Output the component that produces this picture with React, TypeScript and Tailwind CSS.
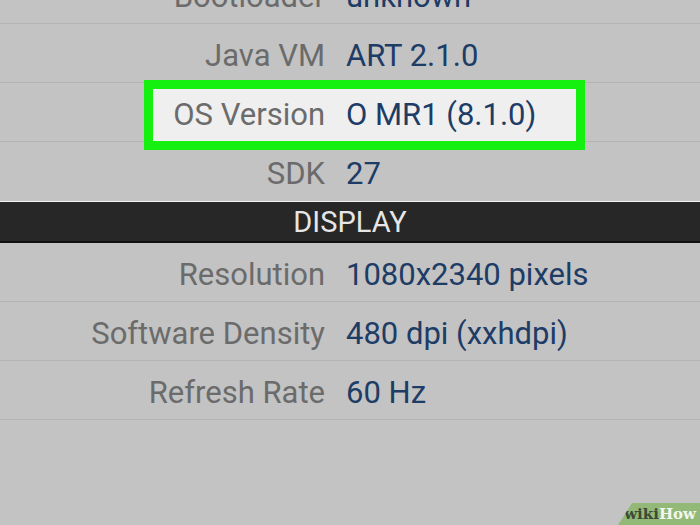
import React from "react";

type Row = { label: string; value: string; highlight?: boolean };

const top: Row[] = [
  { label: "Bootloader", value: "unknown" },
  { label: "Java VM", value: "ART 2.1.0" },
  { label: "OS Version", value: "O MR1 (8.1.0)", highlight: true },
  { label: "SDK", value: "27" },
];

const display: Row[] = [
  { label: "Resolution", value: "1080x2340 pixels" },
  { label: "Software Density", value: "480 dpi (xxhdpi)" },
  { label: "Refresh Rate", value: "60 Hz" },
];

function InfoRow({ row, last }: { row: Row; last?: boolean }) {
  return (
    <div
      className={
        "relative flex h-[59px] items-center pt-[4px] " +
        (last ? "" : "border-b border-[#b3b3b3]")
      }
    >
      {row.highlight && (
        <div className="absolute left-[144px] top-[-3px] h-[70px] w-[441px] border-[9px] border-[#16f010] bg-[#efefef]" />
      )}
      <div className="relative z-10 w-[325px] text-right text-[#6b6b6b]">{row.label}</div>
      <div className="relative z-10 ml-[21px] text-[#1d3c66]">{row.value}</div>
    </div>
  );
}

export default function App() {
  return (
    <div
      className="relative h-[525px] w-[700px] overflow-hidden bg-[#c3c3c3] text-[31px] leading-none"
      style={{ fontFamily: "Roboto, 'Liberation Sans', sans-serif" }}
    >
      <div className="-mt-[35px]">
        {top.map((r, i) => (
          <InfoRow key={r.label} row={r} last={i === top.length - 1} />
        ))}
        <div className="border-t border-[#f2f2f2]">
          <div className="flex h-[41px] items-center justify-center border-b-2 border-[#111] bg-[#272727] pt-[2px] text-[29px] text-[#e6e6e6]">
            DISPLAY
          </div>
        </div>
        {display.map((r) => (
          <InfoRow key={r.label} row={r} />
        ))}
      </div>
      <div
        className="absolute bottom-0 right-0 flex h-[22px] w-[82px] items-center justify-end pr-[4px] bg-[#93b979] text-[15px] font-bold"
        style={{ clipPath: "polygon(14px 0, 100% 0, 100% 100%, 0 100%)", fontFamily: "'DejaVu Serif', serif" }}
      >
        <span className="text-[#3d4a35]">wiki</span>
        <span className="text-[#f3f6ef]">How</span>
      </div>
    </div>
  );
}
